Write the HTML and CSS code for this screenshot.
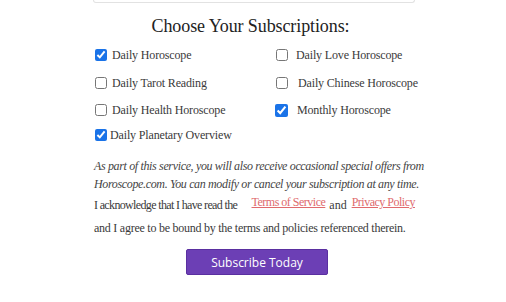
FILE: index.html
```html
<!DOCTYPE html>
<html>
<head>
<meta charset="utf-8">
<link rel="stylesheet" href="styles.css">
</head>
<body>
<div class="page">
  <div class="topbox"></div>
  <h2 class="title">Choose Your Subscriptions:</h2>
  <div class="grid">
    <label class="opt"><input type="checkbox" checked><span>Daily Horoscope</span></label>
    <label class="opt r1"><input type="checkbox"><span>Daily Love Horoscope</span></label>
    <label class="opt"><input type="checkbox"><span>Daily Tarot Reading</span></label>
    <label class="opt r2"><input type="checkbox"><span>Daily Chinese Horoscope</span></label>
    <label class="opt"><input type="checkbox"><span>Daily Health Horoscope</span></label>
    <label class="opt r3"><input type="checkbox" checked><span>Monthly Horoscope</span></label>
    <label class="opt tight"><input type="checkbox" checked><span>Daily Planetary Overview</span></label>
  </div>
  <p class="note">As part of this service, you will also receive occasional special offers from<br>Horoscope.com. You can modify or cancel your subscription at any time.</p>
  <p class="ack">I acknowledge that I have read the <a href="#" class="lnk first">Terms of Service</a><span class="and">and</span><a href="#" class="lnk">Privacy Policy</a></p>
  <p class="ack2">and I agree to be bound by the terms and policies referenced therein.</p>
  <div class="btnrow"><button class="btn">Subscribe Today</button></div>
</div>
</body>
</html>
```
FILE: styles.css
```css
html, body { margin: 0; padding: 0; background: #fff; }
body { width: 506px; height: 302px; overflow: hidden; font-family: "Liberation Serif", serif; color: #333; }
.page { width: 340px; margin-left: 94px; }
.topbox { height: 2px; margin-left: -1px; width: 320px; border: 1px solid #e2e2e2; border-top: none; border-radius: 0 0 3px 3px; }
.title { width: 313px; margin: 11px 0 0 0; text-align: center; font-family: "Liberation Serif", serif; font-weight: normal; font-size: 18px; color: #222; line-height: 24px; letter-spacing: -0.1px; white-space: nowrap; }
.grid { display: grid; grid-template-columns: 181px 1fr; grid-template-rows: 28px 28px 26px 24px; margin-top: 3px; }
.opt { display: flex; align-items: center; font-size: 12px; font-family: "Liberation Serif", serif; color: #3a3a3a; letter-spacing: -0.15px; }
.opt input { margin: 0 5px 0 1px; width: 12px; height: 12px; accent-color: #1a73e8; }
.opt.r1 input { margin-right: 8px; }
.opt.r2 input { margin-left: 1px; margin-right: 10px; }
.opt.r3 input { width: 13px; height: 13px; margin-left: 0; margin-right: 9px; }
.opt.tight input { margin-right: 3px; }
.note { margin: 10px 0 0 0; font-style: italic; font-size: 12px; line-height: 18px; color: #444; letter-spacing: -0.35px; white-space: nowrap; }
.ack { margin: 1px 0 0 0; font-size: 12px; line-height: 22px; color: #3a3a3a; letter-spacing: -0.65px; white-space: nowrap; }
.lnk { color: #e06a6d; text-decoration: underline; position: relative; top: -3px; letter-spacing: -0.5px; }
.lnk.first { margin-left: 12px; }
.and { padding: 0 5px 0 4px; letter-spacing: 0; }
.ack2 { margin: 1px 0 0 0; font-size: 12px; line-height: 22px; color: #3a3a3a; letter-spacing: -0.25px; white-space: nowrap; }
.btnrow { margin-top: 10px; padding-left: 92px; }
.btn { width: 142px; height: 26px; background: #6c3fb5; color: #fff; border: 1px solid #5a2fa0; border-radius: 2px; font-family: "Open Sans", sans-serif; font-size: 12px; padding: 0; }
```
